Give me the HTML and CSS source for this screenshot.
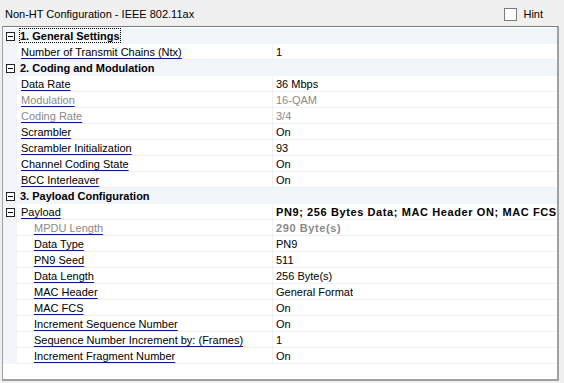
FILE: index.html
```html
<!DOCTYPE html>
<html lang="en">
<head>
    <meta charset="UTF-8">
    <title>Non-HT Configuration</title>
    <link rel="stylesheet" href="styles.css">
</head>
<body>
    <div class="bar">
        <span class="title">Non-HT Configuration - IEEE 802.11ax</span>
        <label class="hint"><span class="box"></span>Hint</label>
    </div>
    <div class="grid">
        <div class="row cat"><span class="margin"><i class="tog"></i></span><span class="cat-label focus">1. General Settings</span></div>
        <div class="row"><span class="margin"></span><span class="name"><a>Number of Transmit Chains (Ntx)</a></span><span class="value">1</span></div>

        <div class="row cat"><span class="margin"><i class="tog"></i></span><span class="cat-label">2. Coding and Modulation</span></div>
        <div class="row"><span class="margin"></span><span class="name"><a>Data Rate</a></span><span class="value">36 Mbps</span></div>
        <div class="row off"><span class="margin"></span><span class="name"><a>Modulation</a></span><span class="value">16-QAM</span></div>
        <div class="row off"><span class="margin"></span><span class="name"><a>Coding Rate</a></span><span class="value">3/4</span></div>
        <div class="row"><span class="margin"></span><span class="name"><a>Scrambler</a></span><span class="value">On</span></div>
        <div class="row"><span class="margin"></span><span class="name"><a>Scrambler Initialization</a></span><span class="value">93</span></div>
        <div class="row"><span class="margin"></span><span class="name"><a>Channel Coding State</a></span><span class="value">On</span></div>
        <div class="row"><span class="margin"></span><span class="name"><a>BCC Interleaver</a></span><span class="value">On</span></div>

        <div class="row cat"><span class="margin"><i class="tog"></i></span><span class="cat-label">3. Payload Configuration</span></div>
        <div class="row"><span class="margin"><i class="tog"></i></span><span class="name"><a>Payload</a></span><span class="value bold">PN9; 256 Bytes Data; MAC Header ON; MAC FCS</span></div>
        <div class="row off sub"><span class="margin"></span><span class="name"><a>MPDU Length</a></span><span class="value bold">290 Byte(s)</span></div>
        <div class="row sub"><span class="margin"></span><span class="name"><a>Data Type</a></span><span class="value">PN9</span></div>
        <div class="row sub"><span class="margin"></span><span class="name"><a>PN9 Seed</a></span><span class="value">511</span></div>
        <div class="row sub"><span class="margin"></span><span class="name"><a>Data Length</a></span><span class="value">256 Byte(s)</span></div>
        <div class="row sub"><span class="margin"></span><span class="name"><a>MAC Header</a></span><span class="value">General Format</span></div>
        <div class="row sub"><span class="margin"></span><span class="name"><a>MAC FCS</a></span><span class="value">On</span></div>
        <div class="row sub"><span class="margin"></span><span class="name"><a>Increment Sequence Number</a></span><span class="value">On</span></div>
        <div class="row sub"><span class="margin"></span><span class="name"><a>Sequence Number Increment by: (Frames)</a></span><span class="value">1</span></div>
        <div class="row sub"><span class="margin"></span><span class="name"><a>Increment Fragment Number</a></span><span class="value">On</span></div>
    </div>
</body>
</html>
```

FILE: styles.css
```css
body {
    margin: 0;
    background-color: #f0f0f0;
    font-family: "Liberation Sans", Arial, sans-serif;
    font-size: 11px;
    color: #000;
}
.bar {
    display: flex;
    align-items: center;
    justify-content: space-between;
    height: 26px;
    padding: 0 21px 0 5px;
}
.title {
    padding-top: 2px;
}
.hint {
    display: flex;
    align-items: center;
    gap: 6px;
    padding-top: 2px;
}
.hint .box {
    width: 11px;
    height: 11px;
    background: #fff;
    border: 1px solid #7a7a7a;
}
.grid {
    margin-left: 2px;
    width: 557px;
    height: 355px;
    padding-top: 1px;
    box-sizing: border-box;
    background: #fff;
    border: 1px solid #a0a0a0;
    border-top-color: #7a7a7a;
    border-right: 2px solid #a0a0a0;
    border-bottom: 2px solid #a0a0a0;
    overflow: hidden;
}
.row {
    display: flex;
    height: 16px;
    padding-top: 1px;
    line-height: 15px;
    box-sizing: border-box;
    border-bottom: 1px solid #f0f0f0;
    white-space: nowrap;
}
.row.cat {
    background: #f2f5fa;
    border-bottom-color: #f2f5fa;
    font-weight: bold;
}
.margin {
    display: flex;
    align-items: center;
    justify-content: center;
    flex: 0 0 14px;
    height: 14px;
    background: #f2f5fa;
    box-shadow: 0 -1px 0 #f2f5fa, 0 1px 0 #f2f5fa;
}
.tog {
    position: relative;
    width: 7px;
    height: 7px;
    margin-left: 1px;
    border: 1px solid #222;
    background: #fff;
}
.tog::after {
    content: "";
    position: absolute;
    left: 1px;
    top: 3px;
    width: 5px;
    height: 1px;
    background: #000;
}
.cat-label {
    height: 15px;
    margin-top: -1px;
    padding: 1px 1px 0;
    margin-left: 2px;
    box-sizing: border-box;
}
.focus {
    outline: 1px dotted #000;
    outline-offset: -1px;
}
.name {
    flex: 0 0 256px;
    padding-left: 4px;
    box-sizing: border-box;
    border-right: 1px solid #f0f0f0;
    margin-top: -1px;
    padding-top: 1px;
    overflow: hidden;
}
.sub .name {
    padding-left: 17px;
}
.name a {
    color: #000;
    text-decoration: underline;
    text-decoration-color: #0000ff;
    text-underline-offset: 2px;
}
.value {
    padding-left: 3px;
    overflow: hidden;
}
.bold {
    font-weight: bold;
    letter-spacing: 0.6px;
}
.off .name a,
.off .value {
    color: #8a8a8a;
}
```
